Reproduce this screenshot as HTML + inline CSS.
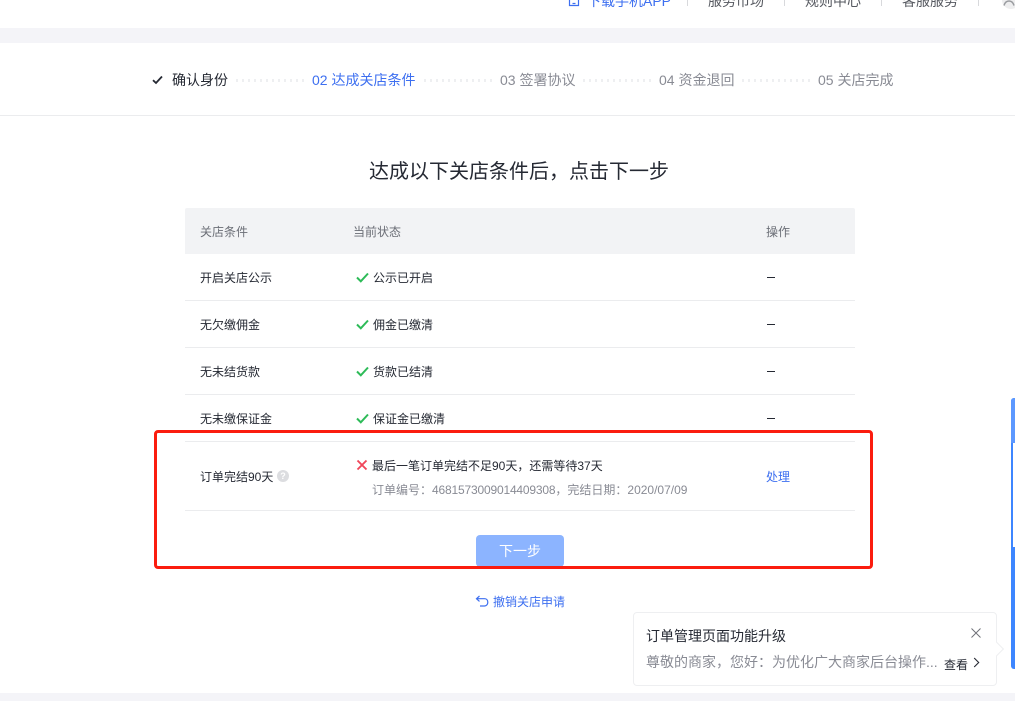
<!DOCTYPE html>
<html lang="zh"><head><meta charset="utf-8"><title>关店</title>
<style>
*{box-sizing:border-box}
html,body{margin:0;padding:0;background:#fff}
body{width:1015px;height:701px;position:relative;overflow:hidden;font-family:"Liberation Sans","Noto Sans CJK SC",sans-serif;color:#252933}
.a{position:absolute;white-space:nowrap}
.t{font-size:12px;line-height:18px;color:#252933}
.g{color:#898b94}
.s{font-size:14px;line-height:20px;top:70px;color:#898b94}
.dots{position:absolute;top:79px;width:68px;height:3px;background:repeating-linear-gradient(90deg,#eeeff1 0 2px,transparent 2px 6px)}
.hr{position:absolute;left:185px;width:670px;height:1px;background:#ebecee}
svg{position:absolute;display:block}
</style></head><body>
<div class="a" style="left:0;top:28px;width:1015px;height:15px;background:#f4f4f8"></div>
<div class="a" style="left:0;top:693px;width:1015px;height:8px;background:#f4f4f8"></div>

<svg style="left:568px;top:0" width="12" height="7" viewBox="0 0 12 7"><path d="M1.5 0V5.5H10.5V0M4.500 3.500H7.500" fill="none" stroke="#3d6ff0" stroke-width="1.200"/></svg>
<div class="a" style="left:587px;top:-8px;font-size:14px;line-height:18px;color:#3d6ff0">下载手机APP</div>
<div class="a" style="left:687px;top:0;width:1px;height:6px;background:#d8d9dc"></div>
<div class="a" style="left:708px;top:-8px;font-size:14px;line-height:18px;color:#565960">服务市场</div>
<div class="a" style="left:784px;top:0;width:1px;height:6px;background:#d8d9dc"></div>
<div class="a" style="left:805px;top:-8px;font-size:14px;line-height:18px;color:#565960">规则中心</div>
<div class="a" style="left:881px;top:0;width:1px;height:6px;background:#d8d9dc"></div>
<div class="a" style="left:902px;top:-8px;font-size:14px;line-height:18px;color:#565960">客服服务</div>
<div class="a" style="left:978px;top:0;width:1px;height:6px;background:#d8d9dc"></div>
<div class="a" style="left:1002px;top:-4px;width:18px;height:13px;border-radius:0 0 9px 9px;background:#eeeeef"></div>
<svg style="left:1003px;top:0" width="12" height="6" viewBox="0 0 12 6"><path d="M1 5.500C2 2 4 1 6 1S10 2 11 5.500" fill="none" stroke="#9a9ca0" stroke-width="1.500"/></svg>

<svg style="left:152px;top:75px" width="11" height="10" viewBox="0 0 11 10"><path d="M1 5.200L4 8L10 1.500" fill="none" stroke="#252933" stroke-width="1.800"/></svg>
<div class="a s" style="left:172px;color:#252933">确认身份</div>
<div class="dots" style="left:236px"></div>
<div class="a s" style="left:312px;color:#3d6ff0">02 达成关店条件</div>
<div class="dots" style="left:424px"></div>
<div class="a s" style="left:500px">03 签署协议</div>
<div class="dots" style="left:583px"></div>
<div class="a s" style="left:659px">04 资金退回</div>
<div class="dots" style="left:742px"></div>
<div class="a s" style="left:818px">05 关店完成</div>
<div class="a" style="left:0;top:115px;width:1015px;height:1px;background:#ebecee"></div>

<div class="a" style="left:369px;top:157px;font-size:20px;line-height:30px;color:#252933">达成以下关店条件后，点击下一步</div>

<div class="a" style="left:185px;top:208px;width:670px;height:46px;background:#f2f3f5;border-radius:2px 2px 0 0"></div>
<div class="a t g" style="left:200px;top:223px;color:#6b6e76">关店条件</div>
<div class="a t g" style="left:353px;top:223px;color:#6b6e76">当前状态</div>
<div class="a t g" style="left:766px;top:223px;color:#6b6e76">操作</div>

<div class="a t" style="left:200px;top:269px">开启关店公示</div>
<svg style="left:356px;top:272px" width="13" height="11" viewBox="0 0 13 11"><path d="M1 5.500L4.800 9.300L12 1.500" fill="none" stroke="#2dbb58" stroke-width="2"/></svg>
<div class="a t" style="left:373px;top:269px">公示已开启</div>
<div class="a" style="left:767px;top:277px;width:8px;height:1px;background:#252933"></div>
<div class="hr" style="top:300px"></div>

<div class="a t" style="left:200px;top:316px">无欠缴佣金</div>
<svg style="left:356px;top:319px" width="13" height="11" viewBox="0 0 13 11"><path d="M1 5.500L4.800 9.300L12 1.500" fill="none" stroke="#2dbb58" stroke-width="2"/></svg>
<div class="a t" style="left:373px;top:316px">佣金已缴清</div>
<div class="a" style="left:767px;top:324px;width:8px;height:1px;background:#252933"></div>
<div class="hr" style="top:347px"></div>

<div class="a t" style="left:200px;top:363px">无未结货款</div>
<svg style="left:356px;top:366px" width="13" height="11" viewBox="0 0 13 11"><path d="M1 5.500L4.800 9.300L12 1.500" fill="none" stroke="#2dbb58" stroke-width="2"/></svg>
<div class="a t" style="left:373px;top:363px">货款已结清</div>
<div class="a" style="left:767px;top:371px;width:8px;height:1px;background:#252933"></div>
<div class="hr" style="top:394px"></div>

<div class="a t" style="left:200px;top:410px">无未缴保证金</div>
<svg style="left:356px;top:413px" width="13" height="11" viewBox="0 0 13 11"><path d="M1 5.500L4.800 9.300L12 1.500" fill="none" stroke="#2dbb58" stroke-width="2"/></svg>
<div class="a t" style="left:373px;top:410px">保证金已缴清</div>
<div class="a" style="left:767px;top:418px;width:8px;height:1px;background:#252933"></div>
<div class="hr" style="top:441px"></div>

<div class="a t" style="left:200px;top:468px">订单完结90天</div>
<div class="a" style="left:277px;top:470px;width:12px;height:12px;border-radius:50%;background:#dcdde0;color:#fff;font-size:9px;line-height:12px;text-align:center;font-weight:bold">?</div>
<svg style="left:356px;top:459px" width="12" height="12" viewBox="0 0 12 12"><path d="M1.500 1.500L10.500 10.500M10.500 1.500L1.500 10.500" fill="none" stroke="#f0465a" stroke-width="1.900"/></svg>
<div class="a t" style="left:372px;top:457px">最后一笔订单完结不足90天，还需等待37天</div>
<div class="a t g" style="left:372px;top:481px">订单编号：<span style="letter-spacing:-.18px">4681573009014409308</span>，完结日期：2020/07/09</div>
<div class="a t" style="left:766px;top:468px;color:#3d6ff0">处理</div>
<div class="hr" style="top:510px"></div>

<div class="a" style="left:476px;top:535px;width:88px;height:32px;border-radius:4px;background:#8cb4ff;color:#fff;font-size:14px;line-height:32px;text-align:center">下一步</div>

<div class="a" style="left:154px;top:430px;width:719px;height:139px;border:3px solid #fb1c0e;border-radius:4px"></div>

<svg style="left:475px;top:595px" width="14" height="14" viewBox="0 0 14 14"><path d="M4.500 1L1.500 3.700L4.500 6.400M1.500 3.700H9.500C11.500 3.700 12.800 5.200 12.800 7.200C12.800 9.300 11.500 11 9.500 11H5" fill="none" stroke="#3d6ff0" stroke-width="1.200"/></svg>
<div class="a t" style="left:493px;top:593px;color:#3d6ff0">撤销关店申请</div>

<div class="a" style="left:633px;top:612px;width:364px;height:74px;background:#fff;border:1px solid #eeeff1;border-radius:4px"></div>
<div class="a" style="left:992px;top:644px;width:10px;height:10px;background:#fff;border-top:1px solid #eeeff1;border-right:1px solid #eeeff1;transform:rotate(45deg)"></div>
<div class="a" style="left:646px;top:627px;font-size:14px;line-height:18px;color:#252933">订单管理页面功能升级</div>
<svg style="left:970px;top:627px" width="12" height="12" viewBox="0 0 12 12"><path d="M1.500 1.500L10.500 10.500M10.500 1.500L1.500 10.500" fill="none" stroke="#6f7178" stroke-width="1"/></svg>
<div class="a" style="left:646px;top:653px;font-size:14px;line-height:18px;color:#898b94">尊敬的商家，您好：为优化广大商家后台操作...</div>
<div class="a t" style="left:944px;top:656px">查看</div>
<svg style="left:973px;top:657px" width="7" height="11" viewBox="0 0 7 11"><path d="M1.200 1L5.700 5.500L1.200 10" fill="none" stroke="#252933" stroke-width="1.100"/></svg>

<div class="a" style="left:1011px;top:398px;width:4px;height:271px;background:#3d86ff;border-radius:3px 0 0 3px"></div>
<div class="a" style="left:1011px;top:398px;width:4px;height:45px;background:#5c98ff;border-radius:3px 0 0 0"></div>
<div class="a" style="left:1013px;top:443px;width:2px;height:104px;background:#fff"></div>
</body></html>
